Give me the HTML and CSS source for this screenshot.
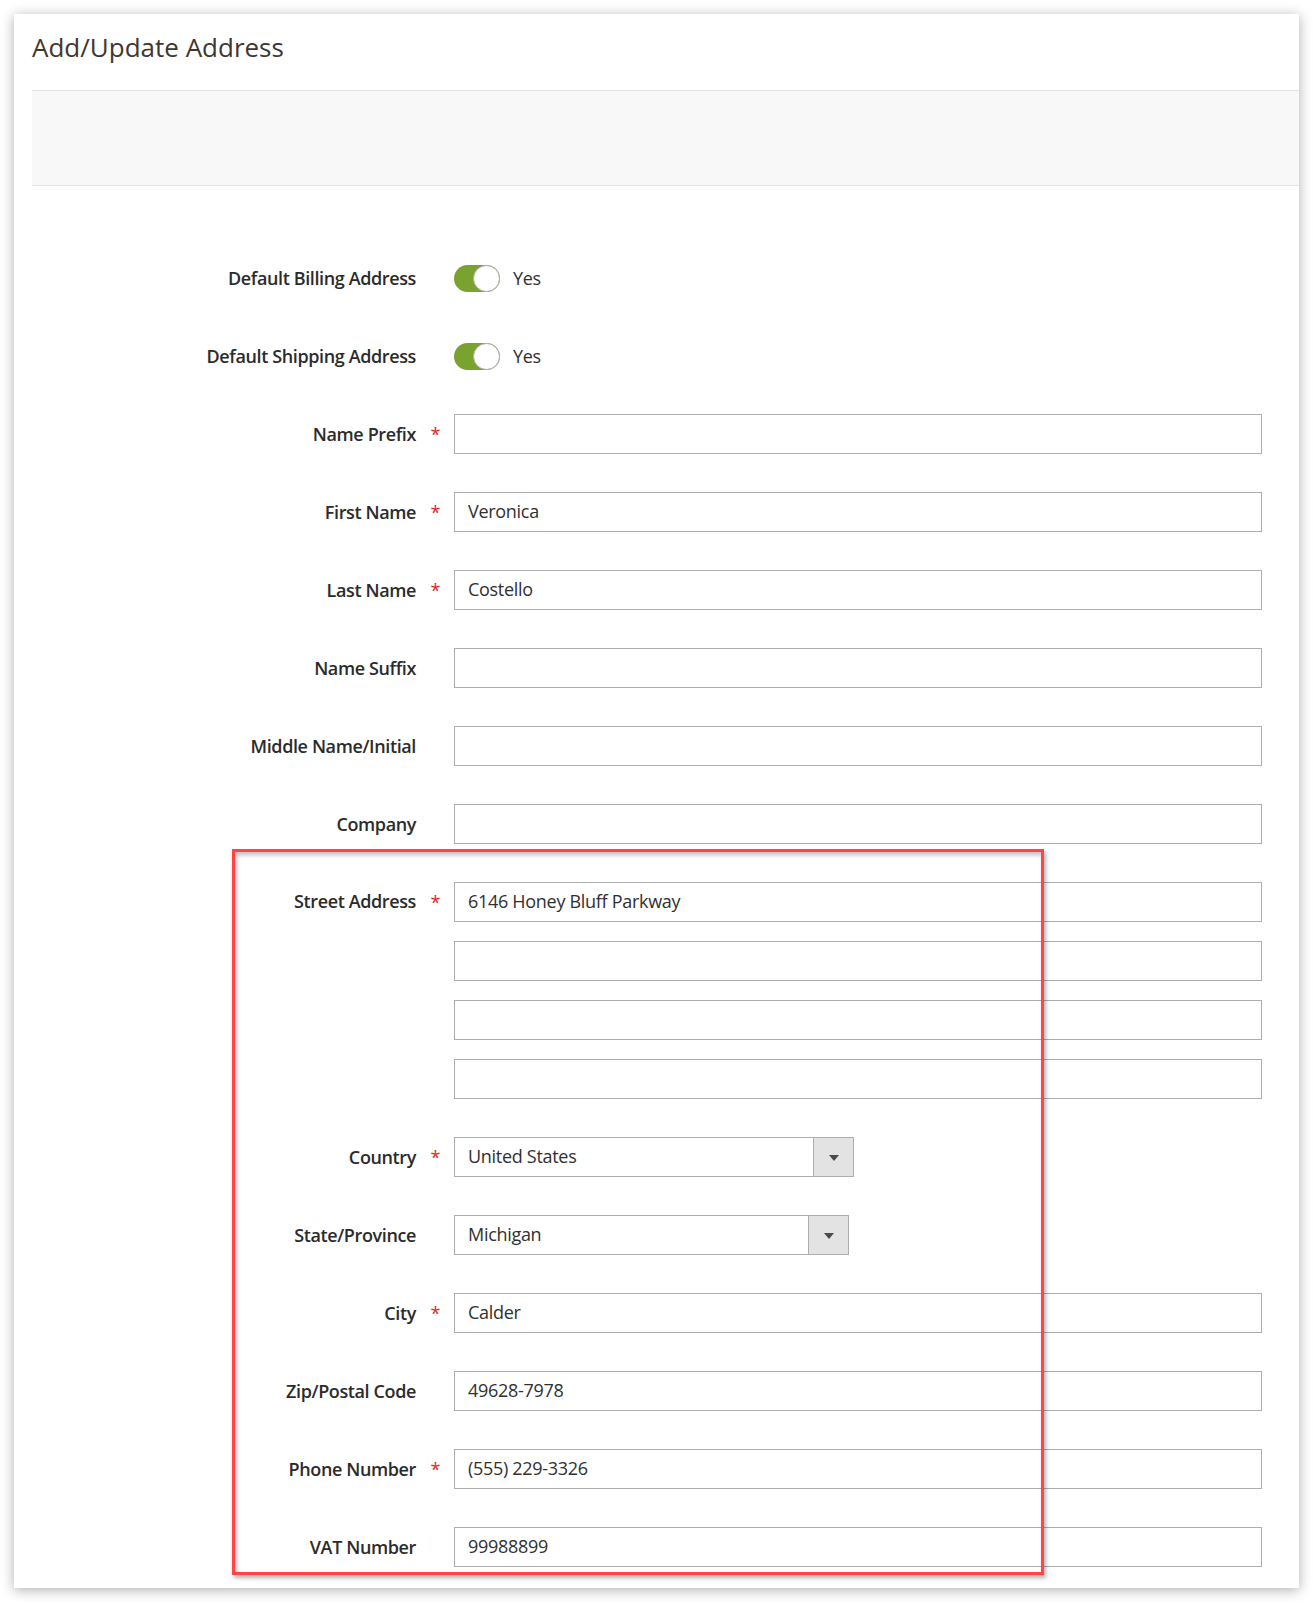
FILE: index.html
```html
<!DOCTYPE html>
<html lang="en">
<head>
<meta charset="utf-8">
<title>Add/Update Address</title>
<link rel="stylesheet" href="styles.css">
</head>
<body>
<div class="page">
  <section class="card">
    <h1 class="title">Add/Update Address</h1>
    <div class="band"></div>
    <form class="form">
      <div class="row">
        <label class="label">Default Billing Address</label>
        <span class="req"></span>
        <div class="control switch-line">
          <span class="switch"><span class="knob"></span></span>
          <span class="switch-text">Yes</span>
        </div>
      </div>
      <div class="row">
        <label class="label">Default Shipping Address</label>
        <span class="req"></span>
        <div class="control switch-line">
          <span class="switch"><span class="knob"></span></span>
          <span class="switch-text">Yes</span>
        </div>
      </div>
      <div class="row">
        <label class="label">Name Prefix</label>
        <span class="req">*</span>
        <input class="input" type="text" value="">
      </div>
      <div class="row">
        <label class="label">First Name</label>
        <span class="req">*</span>
        <input class="input" type="text" value="Veronica">
      </div>
      <div class="row">
        <label class="label">Last Name</label>
        <span class="req">*</span>
        <input class="input" type="text" value="Costello">
      </div>
      <div class="row">
        <label class="label">Name Suffix</label>
        <span class="req"></span>
        <input class="input" type="text" value="">
      </div>
      <div class="row">
        <label class="label">Middle Name/Initial</label>
        <span class="req"></span>
        <input class="input" type="text" value="">
      </div>
      <div class="row">
        <label class="label">Company</label>
        <span class="req"></span>
        <input class="input" type="text" value="">
      </div>

      <div class="group">
        <div class="highlight"></div>
        <div class="row row-top">
          <label class="label">Street Address</label>
          <span class="req">*</span>
          <div class="stack">
            <input class="input" type="text" value="6146 Honey Bluff Parkway">
            <input class="input" type="text" value="">
            <input class="input" type="text" value="">
            <input class="input" type="text" value="">
          </div>
        </div>
        <div class="row">
          <label class="label">Country</label>
          <span class="req">*</span>
          <div class="select select-country">
            <span class="select-value">United States</span>
            <span class="select-btn"><span class="arrow"></span></span>
          </div>
        </div>
        <div class="row">
          <label class="label">State/Province</label>
          <span class="req"></span>
          <div class="select select-state">
            <span class="select-value">Michigan</span>
            <span class="select-btn"><span class="arrow"></span></span>
          </div>
        </div>
        <div class="row">
          <label class="label">City</label>
          <span class="req">*</span>
          <input class="input" type="text" value="Calder">
        </div>
        <div class="row">
          <label class="label">Zip/Postal Code</label>
          <span class="req"></span>
          <input class="input" type="text" value="49628-7978">
        </div>
        <div class="row">
          <label class="label">Phone Number</label>
          <span class="req">*</span>
          <input class="input" type="text" value="(555) 229-3326">
        </div>
        <div class="row">
          <label class="label">VAT Number</label>
          <span class="req"></span>
          <input class="input" type="text" value="99988899">
        </div>
      </div>
    </form>
  </section>
</div>
</body>
</html>
```

FILE: styles.css
```css
* {
  box-sizing: border-box;
}

html, body {
  margin: 0;
  padding: 0;
  background: #ffffff;
}

body {
  font-family: "Open Sans", "Noto Sans", "Liberation Sans", sans-serif;
  color: #303030;
}

.page {
  padding: 14px;
  width: 1313px;
}

.card {
  width: 1285px;
  background: #ffffff;
  box-shadow: 0 2px 12px rgba(0, 0, 0, 0.32);
  padding: 15px 0 21px 18px;
}

.title {
  margin: 0;
  font-size: 26px;
  line-height: 36px;
  font-weight: 400;
  color: #41362f;
}

.band {
  margin-top: 25px;
  height: 96px;
  background: #f8f8f8;
  border-top: 1px solid #e3e3e3;
  border-bottom: 1px solid #e3e3e3;
}

.form {
  margin-top: 72px;
  display: flex;
  flex-direction: column;
  gap: 38px;
}

.group {
  position: relative;
  display: flex;
  flex-direction: column;
  gap: 38px;
}

.row {
  display: grid;
  grid-template-columns: 384px 38px 808px;
  align-items: center;
  min-height: 40px;
}

.row-top {
  align-items: start;
}

.label {
  text-align: right;
  font-size: 18px;
  font-weight: 600;
  letter-spacing: -0.38px;
  line-height: 39px;
  color: #2b2b2b;
  white-space: nowrap;
}

.req {
  text-align: center;
  color: #e22626;
  font-size: 18px;
  font-weight: 400;
  line-height: 40px;
  padding-left: 1px;
}

.input {
  display: block;
  width: 808px;
  height: 40px;
  margin: 0;
  border: 1px solid #adadad;
  border-radius: 0;
  background: #ffffff;
  padding: 0 13px 3px;
  font-family: "Open Sans", "Noto Sans", "Liberation Sans", sans-serif;
  font-size: 18px;
  letter-spacing: -0.3px;
  color: #303030;
  outline: none;
}

.stack {
  display: flex;
  flex-direction: column;
  gap: 19px;
}

.switch-line {
  display: flex;
  align-items: center;
  gap: 13px;
  height: 40px;
}

.switch {
  display: flex;
  justify-content: flex-end;
  width: 46px;
  height: 27px;
  border-radius: 14px;
  background: #79a22e;
}

.knob {
  width: 27px;
  height: 27px;
  border-radius: 50%;
  background: #ffffff;
  border: 1px solid #adadad;
}

.switch-text {
  font-size: 18px;
  letter-spacing: -0.3px;
  color: #303030;
  padding-bottom: 1px;
}

.select {
  display: flex;
  height: 40px;
  border: 1px solid #adadad;
  background: #ffffff;
}

.select-country {
  width: 400px;
}

.select-state {
  width: 395px;
}

.select-value {
  flex: 1;
  padding-left: 13px;
  font-size: 18px;
  letter-spacing: -0.3px;
  line-height: 36px;
  color: #303030;
}

.select-btn {
  width: 40px;
  display: flex;
  align-items: center;
  justify-content: center;
  background: #e3e3e3;
  border-left: 1px solid #adadad;
}

.arrow {
  width: 0;
  height: 0;
  border-left: 5px solid transparent;
  border-right: 5px solid transparent;
  border-top: 6px solid #514943;
  margin-top: 2px;
}

.highlight {
  position: absolute;
  top: -33px;
  left: 200px;
  width: 812px;
  bottom: -8px;
  border: 3px solid #ff4545;
  box-shadow: 2px 3px 4px rgba(0, 0, 0, 0.3), inset 2px 3px 4px rgba(0, 0, 0, 0.25);
  pointer-events: none;
  z-index: 2;
}
```
